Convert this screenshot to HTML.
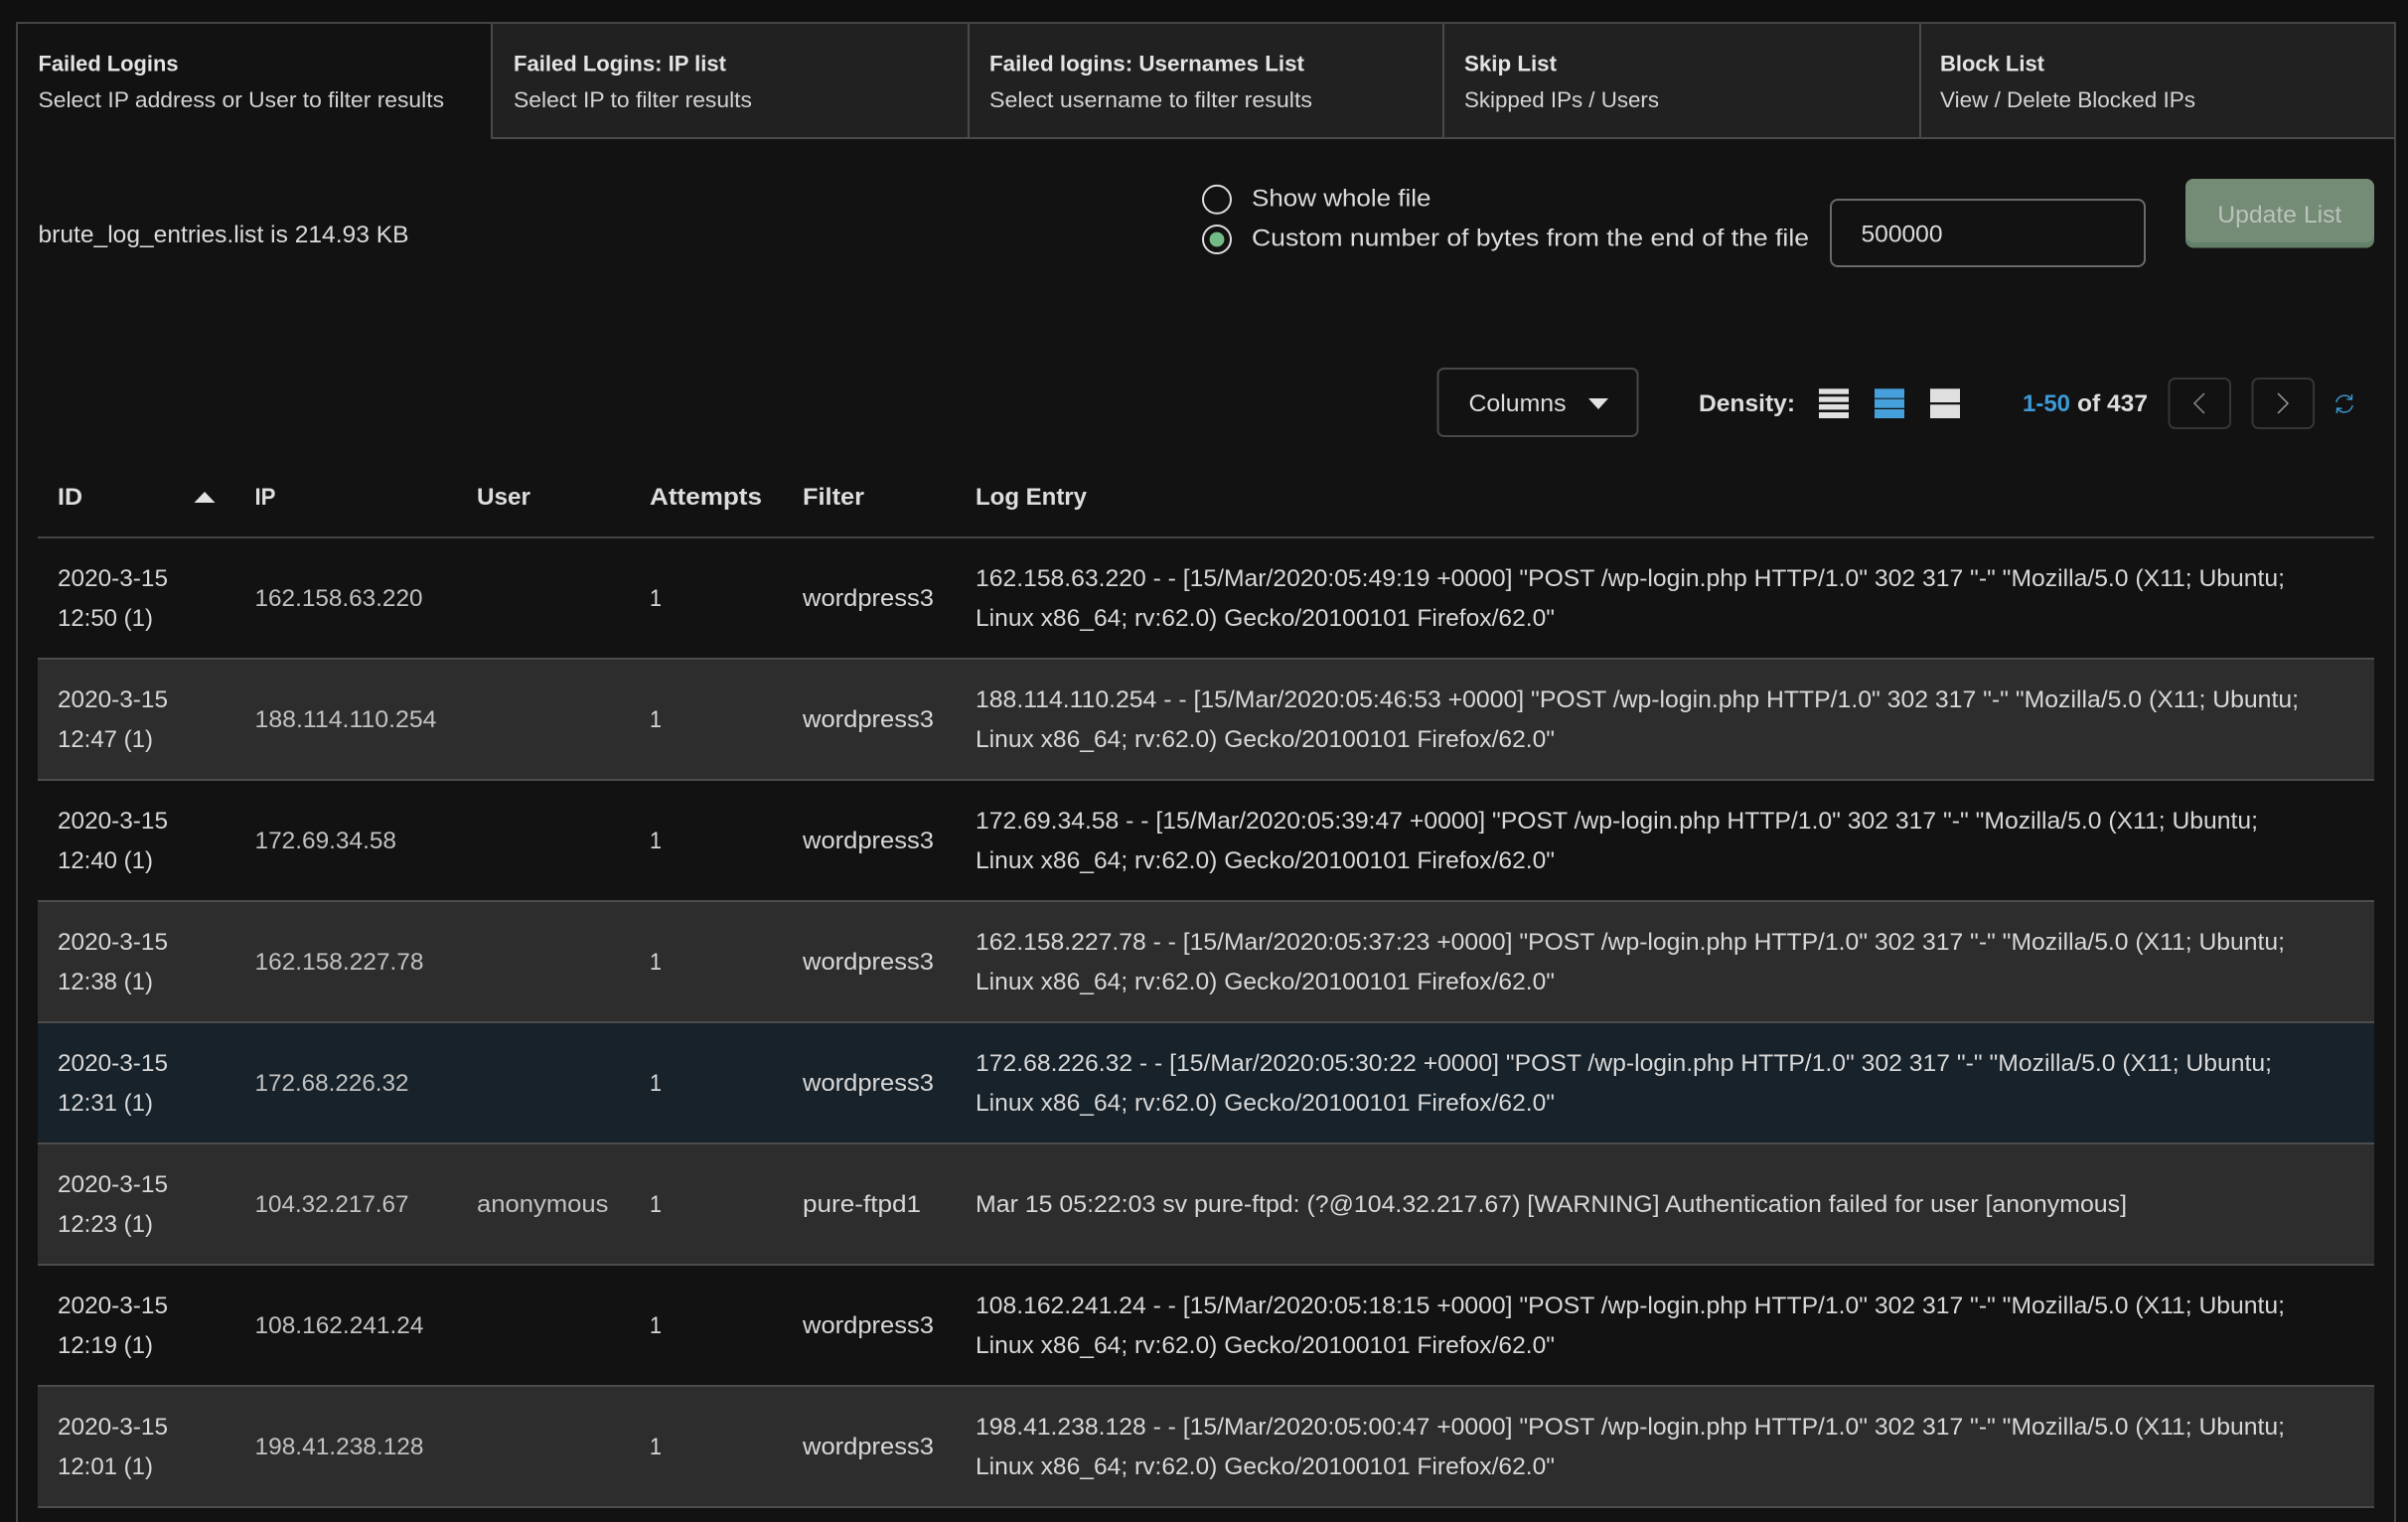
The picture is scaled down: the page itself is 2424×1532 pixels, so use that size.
<!DOCTYPE html>
<html lang="en">
<head>
<meta charset="utf-8">
<title>Failed Logins</title>
<style>
html,body{margin:0;padding:0;background:#111;width:2424px;height:1532px;overflow:hidden}
svg{display:block}
text{font-family:"Liberation Sans",sans-serif;fill:#dcdcdc;font-size:24px}
.t{font-weight:700;font-size:22px;fill:#e4e4e4}
.d{font-size:22px;fill:#d4d4d4}
.h{font-weight:700;fill:#dedede}
.c{fill:#d8d8d8}
.g{fill:#c2c2c2}
</style>
</head>
<body>
<svg xmlns="http://www.w3.org/2000/svg" width="2424" height="1532" viewBox="0 0 2424 1532">
<rect width="2424" height="1532" fill="#101010"/>
<rect x="17" y="23" width="2394" height="1509" fill="#121212"/>
<!-- tabs -->
<rect x="495" y="24" width="1915" height="115" fill="#212121"/>
<rect x="16" y="22" width="2396" height="2" fill="#444"/>
<rect x="16" y="22" width="2" height="1510" fill="#444"/>
<rect x="2410" y="22" width="2" height="1510" fill="#444"/>
<rect x="494" y="138" width="1916" height="2" fill="#4a4a4a"/>
<rect x="494" y="24" width="2" height="116" fill="#4a4a4a"/>
<rect x="974" y="24" width="2" height="116" fill="#4a4a4a"/>
<rect x="1452" y="24" width="2" height="116" fill="#4a4a4a"/>
<rect x="1932" y="24" width="2" height="116" fill="#4a4a4a"/>
<text class="t" x="38.5" y="71.5" textLength="141" lengthAdjust="spacingAndGlyphs">Failed Logins</text>
<text class="d" x="38.5" y="108" textLength="408.5" lengthAdjust="spacingAndGlyphs">Select IP address or User to filter results</text>
<text class="t" x="517" y="71.5" textLength="214" lengthAdjust="spacingAndGlyphs">Failed Logins: IP list</text>
<text class="d" x="517" y="108" textLength="240" lengthAdjust="spacingAndGlyphs">Select IP to filter results</text>
<text class="t" x="996" y="71.5" textLength="317" lengthAdjust="spacingAndGlyphs">Failed logins: Usernames List</text>
<text class="d" x="996" y="108" textLength="325" lengthAdjust="spacingAndGlyphs">Select username to filter results</text>
<text class="t" x="1474" y="71.5" textLength="93" lengthAdjust="spacingAndGlyphs">Skip List</text>
<text class="d" x="1474" y="108" textLength="196" lengthAdjust="spacingAndGlyphs">Skipped IPs / Users</text>
<text class="t" x="1953" y="71.5" textLength="105" lengthAdjust="spacingAndGlyphs">Block List</text>
<text class="d" x="1953" y="108" textLength="257" lengthAdjust="spacingAndGlyphs">View / Delete Blocked IPs</text>
<!-- file row -->
<text x="38.5" y="244" textLength="373" lengthAdjust="spacingAndGlyphs">brute_log_entries.list is 214.93 KB</text>
<circle cx="1225" cy="200.8" r="14" fill="none" stroke="#ddd" stroke-width="2"/>
<circle cx="1225" cy="241" r="14" fill="none" stroke="#ddd" stroke-width="2"/>
<circle cx="1225" cy="241" r="7.4" fill="#73bb85"/>
<text x="1260" y="207.5" textLength="180.5" lengthAdjust="spacingAndGlyphs">Show whole file</text>
<text x="1260" y="247.5" textLength="561" lengthAdjust="spacingAndGlyphs">Custom number of bytes from the end of the file</text>
<rect x="1843" y="201" width="316" height="67" rx="7" fill="#121212" stroke="#6a6a6a" stroke-width="2"/>
<text x="1873.5" y="243.5" textLength="82" lengthAdjust="spacingAndGlyphs" fill="#e4e4e4">500000</text>
<rect x="2200" y="180" width="190" height="69.5" rx="8" fill="#64806a"/>
<rect x="2200" y="180" width="190" height="64" rx="8" fill="#748b76"/>
<text x="2232.3" y="224" textLength="125" lengthAdjust="spacingAndGlyphs" style="fill:#b9c2ba">Update List</text>
<!-- toolbar -->
<rect x="1447.5" y="371" width="201" height="68" rx="6" fill="#121212" stroke="#484848" stroke-width="2"/>
<text x="1478.5" y="414" textLength="98" lengthAdjust="spacingAndGlyphs">Columns</text>
<polygon points="1599,401 1619,401 1609,412" fill="#e2e2e2"/>
<text class="h" x="1710" y="414" textLength="97" lengthAdjust="spacingAndGlyphs">Density:</text>
<g fill="#e0e0e0">
<rect x="1831" y="391.3" width="30" height="5.4"/>
<rect x="1831" y="399.3" width="30" height="5.4"/>
<rect x="1831" y="407" width="30" height="5.4"/>
<rect x="1831" y="415" width="30" height="6"/>
</g>
<g fill="#45a0dc">
<rect x="1887" y="391.3" width="30" height="9.4"/>
<rect x="1887" y="401.7" width="30" height="9"/>
<rect x="1887" y="412" width="30" height="9"/>
</g>
<g fill="#e0e0e0">
<rect x="1943" y="391.3" width="30" height="13.7"/>
<rect x="1943" y="407.3" width="30" height="13.7"/>
</g>
<text class="h" x="2036" y="414" textLength="48" lengthAdjust="spacingAndGlyphs" style="fill:#3d9ad6">1-50</text>
<text class="h" x="2091" y="414" textLength="71" lengthAdjust="spacingAndGlyphs">of 437</text>
<rect x="2183.5" y="381" width="61.5" height="50" rx="6" fill="#121212" stroke="#363636" stroke-width="2"/>
<rect x="2267.5" y="381" width="61.5" height="50" rx="6" fill="#121212" stroke="#363636" stroke-width="2"/>
<path d="M2219 396 L2209 406 L2219 416" fill="none" stroke="#8a8a8a" stroke-width="1.5"/>
<path d="M2293 396 L2303 406 L2293 416" fill="none" stroke="#9a9a9a" stroke-width="1.5"/>
<g fill="none" stroke="#3d9ad6" stroke-width="1.4">
<path d="M2351.8 405 A8.5 8.5 0 0 1 2367 401.5"/>
<path d="M2368.2 408 A8.5 8.5 0 0 1 2353 411.5"/>
<path d="M2362.5 401.8 L2367.4 402 L2367.6 397"/>
<path d="M2357.5 411.2 L2352.6 411 L2352.4 416"/>
</g>
<!-- table header -->
<text class="h" x="58" y="508" textLength="25" lengthAdjust="spacingAndGlyphs">ID</text>
<polygon points="206,495 216.5,506 195.5,506" fill="#e2e2e2"/>
<text class="h" x="256.5" y="508" textLength="21" lengthAdjust="spacingAndGlyphs">IP</text>
<text class="h" x="480" y="508" textLength="54" lengthAdjust="spacingAndGlyphs">User</text>
<text class="h" x="654" y="508" textLength="113" lengthAdjust="spacingAndGlyphs">Attempts</text>
<text class="h" x="808" y="508" textLength="62" lengthAdjust="spacingAndGlyphs">Filter</text>
<text class="h" x="982" y="508" textLength="112" lengthAdjust="spacingAndGlyphs">Log Entry</text>
<!-- rows -->
<rect x="38" y="664" width="2352" height="120" fill="#2d2d2d"/>
<rect x="38" y="908" width="2352" height="120" fill="#2d2d2d"/>
<rect x="38" y="1030" width="2352" height="120" fill="#18222a"/>
<rect x="38" y="1152" width="2352" height="120" fill="#2d2d2d"/>
<rect x="38" y="1396" width="2352" height="120" fill="#2d2d2d"/>
<g fill="#4c4c4c">
<rect x="38" y="540" width="2352" height="2" fill="#444"/>
<rect x="38" y="662" width="2352" height="2"/>
<rect x="38" y="784" width="2352" height="2"/>
<rect x="38" y="906" width="2352" height="2"/>
<rect x="38" y="1028" width="2352" height="2"/>
<rect x="38" y="1150" width="2352" height="2"/>
<rect x="38" y="1272" width="2352" height="2"/>
<rect x="38" y="1394" width="2352" height="2"/>
<rect x="38" y="1516" width="2352" height="2"/>
</g>

<text class="c" x="58" y="590" textLength="111" lengthAdjust="spacingAndGlyphs">2020-3-15</text>
<text class="c" x="58" y="630" textLength="96" lengthAdjust="spacingAndGlyphs">12:50 (1)</text>
<text class="g" x="256.5" y="610" textLength="169" lengthAdjust="spacingAndGlyphs">162.158.63.220</text>
<text class="c" x="654" y="610" textLength="12" lengthAdjust="spacingAndGlyphs">1</text>
<text class="c" x="808" y="610" textLength="132" lengthAdjust="spacingAndGlyphs">wordpress3</text>
<text class="c" x="982" y="590" textLength="1318" lengthAdjust="spacingAndGlyphs">162.158.63.220 - - [15/Mar/2020:05:49:19 +0000] "POST /wp-login.php HTTP/1.0" 302 317 "-" "Mozilla/5.0 (X11; Ubuntu;</text>
<text class="c" x="982" y="630" textLength="583" lengthAdjust="spacingAndGlyphs">Linux x86_64; rv:62.0) Gecko/20100101 Firefox/62.0"</text>

<text class="c" x="58" y="712" textLength="111" lengthAdjust="spacingAndGlyphs">2020-3-15</text>
<text class="c" x="58" y="752" textLength="96" lengthAdjust="spacingAndGlyphs">12:47 (1)</text>
<text class="g" x="256.5" y="732" textLength="183" lengthAdjust="spacingAndGlyphs">188.114.110.254</text>
<text class="c" x="654" y="732" textLength="12" lengthAdjust="spacingAndGlyphs">1</text>
<text class="c" x="808" y="732" textLength="132" lengthAdjust="spacingAndGlyphs">wordpress3</text>
<text class="c" x="982" y="712" textLength="1332" lengthAdjust="spacingAndGlyphs">188.114.110.254 - - [15/Mar/2020:05:46:53 +0000] "POST /wp-login.php HTTP/1.0" 302 317 "-" "Mozilla/5.0 (X11; Ubuntu;</text>
<text class="c" x="982" y="752" textLength="583" lengthAdjust="spacingAndGlyphs">Linux x86_64; rv:62.0) Gecko/20100101 Firefox/62.0"</text>

<text class="c" x="58" y="834" textLength="111" lengthAdjust="spacingAndGlyphs">2020-3-15</text>
<text class="c" x="58" y="874" textLength="96" lengthAdjust="spacingAndGlyphs">12:40 (1)</text>
<text class="g" x="256.5" y="854" textLength="142.5" lengthAdjust="spacingAndGlyphs">172.69.34.58</text>
<text class="c" x="654" y="854" textLength="12" lengthAdjust="spacingAndGlyphs">1</text>
<text class="c" x="808" y="854" textLength="132" lengthAdjust="spacingAndGlyphs">wordpress3</text>
<text class="c" x="982" y="834" textLength="1291" lengthAdjust="spacingAndGlyphs">172.69.34.58 - - [15/Mar/2020:05:39:47 +0000] "POST /wp-login.php HTTP/1.0" 302 317 "-" "Mozilla/5.0 (X11; Ubuntu;</text>
<text class="c" x="982" y="874" textLength="583" lengthAdjust="spacingAndGlyphs">Linux x86_64; rv:62.0) Gecko/20100101 Firefox/62.0"</text>

<text class="c" x="58" y="956" textLength="111" lengthAdjust="spacingAndGlyphs">2020-3-15</text>
<text class="c" x="58" y="996" textLength="96" lengthAdjust="spacingAndGlyphs">12:38 (1)</text>
<text class="g" x="256.5" y="976" textLength="170" lengthAdjust="spacingAndGlyphs">162.158.227.78</text>
<text class="c" x="654" y="976" textLength="12" lengthAdjust="spacingAndGlyphs">1</text>
<text class="c" x="808" y="976" textLength="132" lengthAdjust="spacingAndGlyphs">wordpress3</text>
<text class="c" x="982" y="956" textLength="1318" lengthAdjust="spacingAndGlyphs">162.158.227.78 - - [15/Mar/2020:05:37:23 +0000] "POST /wp-login.php HTTP/1.0" 302 317 "-" "Mozilla/5.0 (X11; Ubuntu;</text>
<text class="c" x="982" y="996" textLength="583" lengthAdjust="spacingAndGlyphs">Linux x86_64; rv:62.0) Gecko/20100101 Firefox/62.0"</text>

<text class="c" x="58" y="1078" textLength="111" lengthAdjust="spacingAndGlyphs">2020-3-15</text>
<text class="c" x="58" y="1118" textLength="96" lengthAdjust="spacingAndGlyphs">12:31 (1)</text>
<text class="g" x="256.5" y="1098" textLength="155" lengthAdjust="spacingAndGlyphs">172.68.226.32</text>
<text class="c" x="654" y="1098" textLength="12" lengthAdjust="spacingAndGlyphs">1</text>
<text class="c" x="808" y="1098" textLength="132" lengthAdjust="spacingAndGlyphs">wordpress3</text>
<text class="c" x="982" y="1078" textLength="1305" lengthAdjust="spacingAndGlyphs">172.68.226.32 - - [15/Mar/2020:05:30:22 +0000] "POST /wp-login.php HTTP/1.0" 302 317 "-" "Mozilla/5.0 (X11; Ubuntu;</text>
<text class="c" x="982" y="1118" textLength="583" lengthAdjust="spacingAndGlyphs">Linux x86_64; rv:62.0) Gecko/20100101 Firefox/62.0"</text>

<text class="c" x="58" y="1200" textLength="111" lengthAdjust="spacingAndGlyphs">2020-3-15</text>
<text class="c" x="58" y="1240" textLength="96" lengthAdjust="spacingAndGlyphs">12:23 (1)</text>
<text class="g" x="256.5" y="1220" textLength="155" lengthAdjust="spacingAndGlyphs">104.32.217.67</text>
<text class="g" x="480" y="1220" textLength="132.5" lengthAdjust="spacingAndGlyphs">anonymous</text>
<text class="c" x="654" y="1220" textLength="12" lengthAdjust="spacingAndGlyphs">1</text>
<text class="c" x="808" y="1220" textLength="119" lengthAdjust="spacingAndGlyphs">pure-ftpd1</text>
<text class="c" x="982" y="1220" textLength="1159" lengthAdjust="spacingAndGlyphs">Mar 15 05:22:03 sv pure-ftpd: (?@104.32.217.67) [WARNING] Authentication failed for user [anonymous]</text>

<text class="c" x="58" y="1322" textLength="111" lengthAdjust="spacingAndGlyphs">2020-3-15</text>
<text class="c" x="58" y="1362" textLength="96" lengthAdjust="spacingAndGlyphs">12:19 (1)</text>
<text class="g" x="256.5" y="1342" textLength="170" lengthAdjust="spacingAndGlyphs">108.162.241.24</text>
<text class="c" x="654" y="1342" textLength="12" lengthAdjust="spacingAndGlyphs">1</text>
<text class="c" x="808" y="1342" textLength="132" lengthAdjust="spacingAndGlyphs">wordpress3</text>
<text class="c" x="982" y="1322" textLength="1318" lengthAdjust="spacingAndGlyphs">108.162.241.24 - - [15/Mar/2020:05:18:15 +0000] "POST /wp-login.php HTTP/1.0" 302 317 "-" "Mozilla/5.0 (X11; Ubuntu;</text>
<text class="c" x="982" y="1362" textLength="583" lengthAdjust="spacingAndGlyphs">Linux x86_64; rv:62.0) Gecko/20100101 Firefox/62.0"</text>

<text class="c" x="58" y="1444" textLength="111" lengthAdjust="spacingAndGlyphs">2020-3-15</text>
<text class="c" x="58" y="1484" textLength="96" lengthAdjust="spacingAndGlyphs">12:01 (1)</text>
<text class="g" x="256.5" y="1464" textLength="170" lengthAdjust="spacingAndGlyphs">198.41.238.128</text>
<text class="c" x="654" y="1464" textLength="12" lengthAdjust="spacingAndGlyphs">1</text>
<text class="c" x="808" y="1464" textLength="132" lengthAdjust="spacingAndGlyphs">wordpress3</text>
<text class="c" x="982" y="1444" textLength="1318" lengthAdjust="spacingAndGlyphs">198.41.238.128 - - [15/Mar/2020:05:00:47 +0000] "POST /wp-login.php HTTP/1.0" 302 317 "-" "Mozilla/5.0 (X11; Ubuntu;</text>
<text class="c" x="982" y="1484" textLength="583" lengthAdjust="spacingAndGlyphs">Linux x86_64; rv:62.0) Gecko/20100101 Firefox/62.0"</text>
</svg>
</body>
</html>
